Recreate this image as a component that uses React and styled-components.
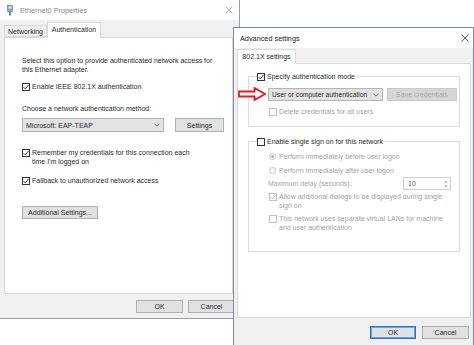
import React from 'react';
import styled, { createGlobalStyle } from 'styled-components';

const GlobalStyle = createGlobalStyle`
  html, body {
    margin: 0;
    padding: 0;
    background: #fff;
    overflow: hidden;
  }
  body {
    font-family: "Liberation Sans", Arial, sans-serif;
    font-size: 7px;
    color: #2b2b2b;
  }
`;

const Styled = {
  Desktop: styled.div`
    position: relative;
    width: 474px;
    height: 345px;
    overflow: hidden;
    background: #fff;
  `,

  Window: styled.div`
    position: absolute;
    left: ${p => p.$left}px;
    top: ${p => p.$top}px;
    width: ${p => p.$width}px;
    height: ${p => p.$height}px;
    box-sizing: border-box;
    display: flex;
    flex-direction: column;
    background: #f0f0f0;
    border: 1px solid ${p => p.$border};
  `,

  TitleBar: styled.div`
    flex: none;
    height: 20px;
    display: flex;
    align-items: center;
    padding: 0 ${p => p.$pr}px 0 ${p => p.$pl}px;
    gap: ${p => p.$gap}px;
    background: #fff;
    font-size: 7.3px;
    color: ${p => (p.$inactive ? '#8a8a8a' : '#222')};

    span {
      flex: 1;
      white-space: nowrap;
    }
  `,

  TabStrip: styled.div`
    flex: none;
    height: ${p => p.$h}px;
    display: flex;
    align-items: flex-end;
    padding-left: ${p => p.$pl}px;
    position: relative;
    z-index: 1;
  `,

  Tab: styled.div`
    box-sizing: border-box;
    width: ${p => p.$w}px;
    height: ${p => p.$h}px;
    display: flex;
    align-items: center;
    justify-content: center;
    border: 1px solid #d9d9d9;
    border-bottom: ${p => (p.$active ? 'none' : '1px solid #d9d9d9')};
    background: ${p => (p.$active ? '#fff' : '#f0f0f0')};
    margin-bottom: ${p => (p.$active ? -1 : 0)}px;
    padding-bottom: ${p => (p.$active ? 2 : 0)}px;
    white-space: nowrap;
  `,

  Panel: styled.div`
    flex: 1;
    position: relative;
    display: flex;
    flex-direction: column;
    align-items: flex-start;
    box-sizing: border-box;
    margin: 0 ${p => p.$mr}px 0 ${p => p.$ml}px;
    padding: ${p => p.$pt}px 0 0 ${p => p.$pl}px;
    background: #fff;
    border: 1px solid #d9d9d9;
  `,

  Footer: styled.div`
    flex: none;
    height: ${p => p.$h}px;
    box-sizing: border-box;
    display: flex;
    justify-content: flex-end;
    align-items: flex-start;
    gap: ${p => p.$gap}px;
    padding: ${p => p.$pt}px ${p => p.$pr}px 0 0;
  `,

  Text: styled.div`
    line-height: 9px;
    white-space: nowrap;
    margin-top: ${p => p.$mt || 0}px;
    color: ${p => (p.$disabled ? '#a3a3a3' : '#2b2b2b')};
  `,

  Option: styled.div`
    display: flex;
    align-items: flex-start;
    gap: 2px;
    margin-top: ${p => p.$mt || 0}px;
    margin-left: ${p => p.$ml || 0}px;
  `,

  Row: styled.div`
    display: flex;
    align-items: center;
    align-self: stretch;
    margin-top: ${p => p.$mt || 0}px;
    gap: ${p => p.$gap || 0}px;
  `,

  Box: styled.span`
    flex: none;
    width: 8px;
    height: 8px;
    margin-top: 0.5px;
    box-sizing: border-box;
    display: inline-flex;
    align-items: center;
    justify-content: center;
    background: #fff;
    border: 1px solid ${p => (p.$disabled ? '#c2c2c2' : '#333')};
  `,

  Radio: styled.span`
    flex: none;
    width: 7px;
    height: 7px;
    margin: 1px 1px 0 0;
    box-sizing: border-box;
    border-radius: 50%;
    display: inline-flex;
    align-items: center;
    justify-content: center;
    background: #fff;
    border: 1px solid #c4c4c4;

    &::after {
      content: '';
      display: ${p => (p.$checked ? 'block' : 'none')};
      width: 3px;
      height: 3px;
      border-radius: 50%;
      background: #b3b3b3;
    }
  `,

  Select: styled.div`
    box-sizing: border-box;
    width: ${p => p.$w}px;
    height: ${p => p.$h}px;
    display: flex;
    align-items: center;
    justify-content: space-between;
    gap: 2px;
    padding: 0 3px 0 3px;
    background: #e3e3e3;
    border: 1px solid #b4b4b4;
    font-size: ${p => p.$fs || 7}px;
    white-space: nowrap;
    overflow: hidden;

    svg {
      flex: none;
    }
  `,

  Button: styled.button`
    box-sizing: border-box;
    flex: none;
    width: ${p => p.$w}px;
    height: ${p => p.$h || 13}px;
    margin: 0 0 0 ${p => p.$ml || 0}px;
    padding: 0;
    font-family: inherit;
    font-size: 7px;
    color: ${p => (p.$disabled ? '#a8a8a8' : '#2b2b2b')};
    background: ${p => (p.$disabled ? '#d6d6d6' : '#e1e1e1')};
    border: 1px solid ${p => (p.$default ? '#2a72c8' : p.$disabled ? '#cbcbcb' : '#b0b0b0')};
    box-shadow: ${p => (p.$default ? 'inset 0 0 0 1px #6ea3e0' : 'none')};
    white-space: nowrap;
  `,

  Group: styled.fieldset`
    align-self: stretch;
    margin: ${p => p.$mt || 0}px 10px 0 10px;
    padding: 0;
    min-width: 0;
    border: 1px solid #dcdcdc;

    legend {
      display: flex;
      align-items: flex-start;
      gap: 2px;
      margin-left: 8px;
      padding: 0 2px 0 0;
      line-height: 9px;
      white-space: nowrap;
    }
  `,

  GroupBody: styled.div`
    display: flex;
    flex-direction: column;
    align-items: flex-start;
    padding: ${p => p.$pt}px 1px ${p => p.$pb}px 19px;
  `,

  Spinner: styled.div`
    box-sizing: border-box;
    width: 48px;
    height: 13px;
    margin: 0 7px 0 auto;
    display: flex;
    align-items: center;
    justify-content: space-between;
    padding: 0 1px 0 4px;
    background: #fff;
    border: 1px solid #cfcfcf;
    color: #555;
  `,

  Arrow: styled.svg`
    position: absolute;
    left: 0;
    top: 23px;
  `
};

const Chevron = () => (
  <svg width="6" height="4" viewBox="0 0 6 4">
    <path d="M0.5 0.8 L3 3.2 L5.5 0.8" fill="none" stroke="#555" strokeWidth="0.8" />
  </svg>
);

const CloseIcon = ({ color }) => (
  <svg width="8" height="8" viewBox="0 0 8 8">
    <path d="M0.5 0.5 L7.5 7.5 M7.5 0.5 L0.5 7.5" stroke={color} strokeWidth="0.8" />
  </svg>
);

const Check = ({ checked, disabled }) => (
  <Styled.Box $disabled={disabled}>
    {checked && (
      <svg width="6" height="6" viewBox="0 0 6 6">
        <path d="M0.5 3.1 L2.3 4.9 L5.6 0.9" fill="none" stroke={disabled ? '#b5b5b5' : '#222'} strokeWidth="0.9" />
      </svg>
    )}
  </Styled.Box>
);

const EthernetIcon = () => (
  <svg width="6" height="11" viewBox="0 0 6 11">
    <rect x="0.5" y="0.5" width="5" height="6" fill="#8fa7c4" stroke="#5d7597" strokeWidth="0.6" />
    <rect x="1.5" y="1.5" width="3" height="2" fill="#dbe5f1" />
    <rect x="2" y="6.5" width="2" height="4" fill="#6f86a6" />
  </svg>
);

const SpinArrows = () => (
  <svg width="6" height="10" viewBox="0 0 6 10">
    <path d="M1.5 3.5 L3 1.8 L4.5 3.5 Z M1.5 6.5 L3 8.2 L4.5 6.5 Z" fill="#888" />
  </svg>
);

const PropertiesWindow = () => (
  <Styled.Window $left={-1} $top={-1} $width={241} $height={320} $border="#9c9c9c">
    <Styled.TitleBar $inactive $pl={7} $pr={6} $gap={7}>
      <EthernetIcon />
      <span>Ethernet0 Properties</span>
      <CloseIcon color="#9a9a9a" />
    </Styled.TitleBar>
    <Styled.TabStrip $h={17} $pl={4}>
      <Styled.Tab $w={43} $h={12}>Networking</Styled.Tab>
      <Styled.Tab $w={54} $h={16} $active>Authentication</Styled.Tab>
    </Styled.TabStrip>
    <Styled.Panel $ml={4} $mr={6} $pt={18} $pl={17}>
      <Styled.Text>
        Select this option to provide authenticated network access for
        <br />
        this Ethernet adapter.
      </Styled.Text>
      <Styled.Option $mt={8}>
        <Check checked />
        <Styled.Text>Enable IEEE 802.1X authentication</Styled.Text>
      </Styled.Option>
      <Styled.Text $mt={13}>Choose a network authentication method:</Styled.Text>
      <Styled.Row $mt={5}>
        <Styled.Select $w={142} $h={14}>
          Microsoft: EAP-TEAP
          <Chevron />
        </Styled.Select>
        <Styled.Button $w={49} $h={14} $ml={11}>Settings</Styled.Button>
      </Styled.Row>
      <Styled.Option $mt={16}>
        <Check checked />
        <Styled.Text>
          Remember my credentials for this connection each
          <br />
          time I'm logged on
        </Styled.Text>
      </Styled.Option>
      <Styled.Option $mt={10}>
        <Check checked />
        <Styled.Text>Fallback to unauthorized network access</Styled.Text>
      </Styled.Option>
      <Styled.Button $w={76} $h={13} style={{ marginTop: 21 }}>Additional Settings...</Styled.Button>
    </Styled.Panel>
    <Styled.Footer $h={24} $gap={5} $pt={6} $pr={4}>
      <Styled.Button $w={47}>OK</Styled.Button>
      <Styled.Button $w={47}>Cancel</Styled.Button>
    </Styled.Footer>
  </Styled.Window>
);

const AdvancedWindow = () => (
  <Styled.Window $left={233} $top={27} $width={241} $height={330} $border="#7b8ca3">
    <Styled.TitleBar $pl={6} $pr={4} $gap={0}>
      <span>Advanced settings</span>
      <CloseIcon color="#333" />
    </Styled.TitleBar>
    <Styled.TabStrip $h={15} $pl={3}>
      <Styled.Tab $w={59} $h={15} $active>802.1X settings</Styled.Tab>
    </Styled.TabStrip>
    <Styled.Panel $ml={3} $mr={2} $pt={8} $pl={0}>
      <Styled.Arrow width="28" height="14" viewBox="0 0 28 14">
        <path d="M1 4.5 H16.5 V1 L27 7 L16.5 13 V9.5 H1 Z" fill="#fff" stroke="#e3191f" strokeWidth="1.8" strokeLinejoin="miter" />
      </Styled.Arrow>
      <Styled.Group>
        <legend>
          <Check checked />
          <Styled.Text>Specify authentication mode</Styled.Text>
        </legend>
        <Styled.GroupBody $pt={7} $pb={10}>
          <Styled.Row $gap={4}>
            <Styled.Select $w={115} $h={13} $fs={6.7}>
              User or computer authentication
              <Chevron />
            </Styled.Select>
            <Styled.Button $w={70} $disabled>Save credentials</Styled.Button>
          </Styled.Row>
          <Styled.Option $mt={6} $ml={1}>
            <Check disabled />
            <Styled.Text $disabled>Delete credentials for all users</Styled.Text>
          </Styled.Option>
        </Styled.GroupBody>
      </Styled.Group>
      <Styled.Group $mt={10}>
        <legend>
          <Check />
          <Styled.Text>Enable single sign on for this network</Styled.Text>
        </legend>
        <Styled.GroupBody $pt={6} $pb={19}>
          <Styled.Option $ml={1}>
            <Styled.Radio $checked />
            <Styled.Text $disabled>Perform immediately before user logon</Styled.Text>
          </Styled.Option>
          <Styled.Option $mt={5} $ml={1}>
            <Styled.Radio />
            <Styled.Text $disabled>Perform immediately after user logon</Styled.Text>
          </Styled.Option>
          <Styled.Row $mt={2}>
            <Styled.Text $disabled>Maximum delay (seconds):</Styled.Text>
            <Styled.Spinner>
              10
              <SpinArrows />
            </Styled.Spinner>
          </Styled.Row>
          <Styled.Option $mt={2} $ml={1}>
            <Check checked disabled />
            <Styled.Text $disabled>
              Allow additional dialogs to be displayed during single
              <br />
              sign on
            </Styled.Text>
          </Styled.Option>
          <Styled.Option $mt={4} $ml={1}>
            <Check disabled />
            <Styled.Text $disabled>
              This network uses separate virtual LANs for machine
              <br />
              and user authentication
            </Styled.Text>
          </Styled.Option>
        </Styled.GroupBody>
      </Styled.Group>
    </Styled.Panel>
    <Styled.Footer $h={38} $gap={6} $pt={8} $pr={4}>
      <Styled.Button $w={46} $default>OK</Styled.Button>
      <Styled.Button $w={47}>Cancel</Styled.Button>
    </Styled.Footer>
  </Styled.Window>
);

const App = () => {
  return (
    <>
      <GlobalStyle />
      <Styled.Desktop>
        <PropertiesWindow />
        <AdvancedWindow />
      </Styled.Desktop>
    </>
  );
};

export default App;
